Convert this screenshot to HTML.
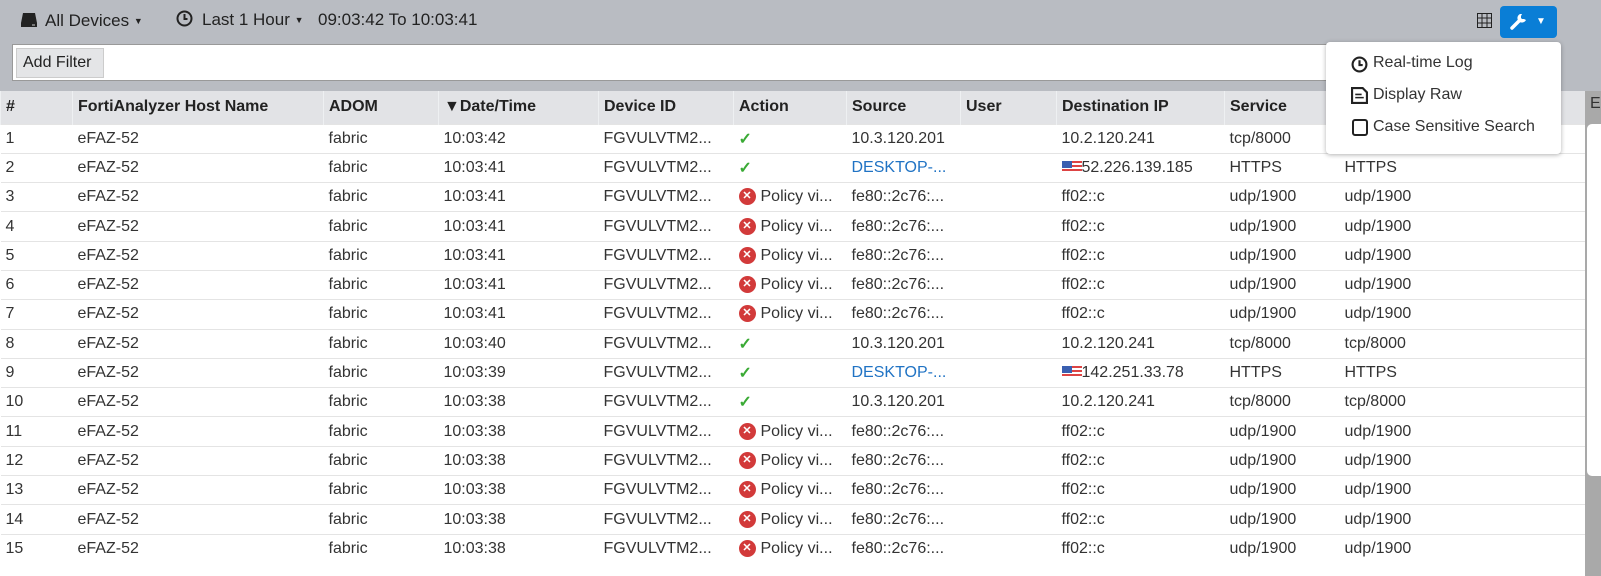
<!DOCTYPE html>
<html><head><style>
*{margin:0;padding:0;box-sizing:border-box}
body{width:1601px;height:576px;overflow:hidden;background:#fff;font-family:"Liberation Sans",sans-serif;font-size:16px;color:#333;position:relative}
.top{position:absolute;left:0;top:0;width:1601px;height:91px;background:#b9bcc2}
.t{position:absolute;white-space:nowrap}
.filter{position:absolute;left:12px;top:44px;width:1330px;height:37px;background:#fff;border:1px solid #999}
.addf{position:absolute;left:3px;top:3px;width:88px;height:30px;background:#e4e5e7;border:1px solid #ccc;font-size:16px;line-height:28px;padding-left:6px;color:#222}
table{position:absolute;left:0;top:91px;width:1585px;border-collapse:collapse;table-layout:fixed}
th{background:#e2e3e6;height:33px;text-align:left;font-weight:bold;padding-left:5px;border-left:1px solid #eef0f2;white-space:nowrap;overflow:hidden;font-size:16px;color:#222}
td{height:29.3px;padding-left:5px;border-top:1px solid #e4e4e4;white-space:nowrap;overflow:hidden;vertical-align:middle}
.blue{color:#2073c4}
.chk{color:#3aaa35;font-weight:bold}
.x{display:inline-block;width:17px;height:17px;border-radius:50%;background:#d23a3a;color:#fff;font-size:11px;line-height:17px;text-align:center;font-weight:bold;vertical-align:top;margin-right:5px;margin-top:0px}
.flag{display:inline-block;width:20px;height:12px;background:repeating-linear-gradient(#d44 0 2px,#fff 2px 4px);position:relative;vertical-align:-1px}
.flag:before{content:"";position:absolute;left:0;top:0;width:10px;height:7px;background:#3a5fb0}
.menu{position:absolute;left:1326px;top:42px;width:235px;height:112px;background:#fff;border-radius:4px;box-shadow:0 1px 5px rgba(0,0,0,.3)}
.sb{position:absolute;left:1585px;top:91px;width:16px;height:485px;background:#a9a9a9}
.thumb{position:absolute;left:1587px;top:124px;width:14px;height:352px;background:#fff;border-radius:5px 0 0 5px}
</style></head><body>
<div class="top"></div>
<svg class="t" style="left:20px;top:12px" width="18" height="16" viewBox="0 0 18 16"><path d="M3 1h12l2 10H1z" fill="#222"/><rect x="1" y="11" width="16" height="4" fill="#222"/><rect x="12" y="12.5" width="3" height="1" fill="#ccc"/></svg>
<div class="t" style="left:45px;top:11px;font-size:17px;color:#222">All Devices <span style="font-size:9px;vertical-align:2px">▼</span></div>
<svg class="t" style="left:176px;top:10px" width="17" height="17" viewBox="0 0 17 17"><circle cx="8.5" cy="8.5" r="7" fill="none" stroke="#222" stroke-width="2"/><path d="M8.5 4v5h3" fill="none" stroke="#222" stroke-width="2"/></svg>
<div class="t" style="left:202px;top:10px;font-size:17px;color:#222">Last 1 Hour <span style="font-size:9px;vertical-align:2px">▼</span></div>
<div class="t" style="left:318px;top:10px;font-size:17px;color:#222">09:03:42 To 10:03:41</div>
<svg class="t" style="left:1477px;top:13px" width="15" height="15" viewBox="0 0 15 15"><rect x="0.5" y="0.5" width="14" height="14" fill="none" stroke="#222"/><path d="M5 0v15M10 0v15M0 5h15M0 10h15" stroke="#222"/></svg>
<div class="t" style="left:1500px;top:6px;width:57px;height:32px;background:#0a7ed6;border-radius:4px"></div>
<svg class="t" style="left:1509px;top:11px" width="20" height="20" viewBox="0 0 20 20"><path d="M3 17l8-8" stroke="#fff" stroke-width="3.5" stroke-linecap="round"/><path d="M11 3a4.5 4.5 0 1 0 6 6l-2-1-2 0-1-1 0-2 1-2z" fill="#fff"/></svg>
<div class="t" style="left:1536px;top:16px;color:#fff;font-size:10px">▼</div>
<div class="filter"><div class="addf">Add Filter</div></div>
<table>
<colgroup><col style="width:72px"><col style="width:251px"><col style="width:115px"><col style="width:160px"><col style="width:135px"><col style="width:113px"><col style="width:114px"><col style="width:96px"><col style="width:168px"><col style="width:115px"><col style="width:246px"></colgroup>
<tr><th>#</th><th>FortiAnalyzer Host Name</th><th>ADOM</th><th>▼Date/Time</th><th>Device ID</th><th>Action</th><th>Source</th><th>User</th><th>Destination IP</th><th>Service</th><th></th></tr>
<tr><td>1</td><td>eFAZ-52</td><td>fabric</td><td>10:03:42</td><td>FGVULVTM2...</td><td class="chk">✓</td><td>10.3.120.201</td><td></td><td>10.2.120.241</td><td>tcp/8000</td><td>tcp/8000</td></tr>
<tr><td>2</td><td>eFAZ-52</td><td>fabric</td><td>10:03:41</td><td>FGVULVTM2...</td><td class="chk">✓</td><td class="blue">DESKTOP-...</td><td></td><td><span class="flag"></span>52.226.139.185</td><td>HTTPS</td><td>HTTPS</td></tr>
<tr><td>3</td><td>eFAZ-52</td><td>fabric</td><td>10:03:41</td><td>FGVULVTM2...</td><td><span class="x">✕</span>Policy vi...</td><td>fe80::2c76:...</td><td></td><td>ff02::c</td><td>udp/1900</td><td>udp/1900</td></tr>
<tr><td>4</td><td>eFAZ-52</td><td>fabric</td><td>10:03:41</td><td>FGVULVTM2...</td><td><span class="x">✕</span>Policy vi...</td><td>fe80::2c76:...</td><td></td><td>ff02::c</td><td>udp/1900</td><td>udp/1900</td></tr>
<tr><td>5</td><td>eFAZ-52</td><td>fabric</td><td>10:03:41</td><td>FGVULVTM2...</td><td><span class="x">✕</span>Policy vi...</td><td>fe80::2c76:...</td><td></td><td>ff02::c</td><td>udp/1900</td><td>udp/1900</td></tr>
<tr><td>6</td><td>eFAZ-52</td><td>fabric</td><td>10:03:41</td><td>FGVULVTM2...</td><td><span class="x">✕</span>Policy vi...</td><td>fe80::2c76:...</td><td></td><td>ff02::c</td><td>udp/1900</td><td>udp/1900</td></tr>
<tr><td>7</td><td>eFAZ-52</td><td>fabric</td><td>10:03:41</td><td>FGVULVTM2...</td><td><span class="x">✕</span>Policy vi...</td><td>fe80::2c76:...</td><td></td><td>ff02::c</td><td>udp/1900</td><td>udp/1900</td></tr>
<tr><td>8</td><td>eFAZ-52</td><td>fabric</td><td>10:03:40</td><td>FGVULVTM2...</td><td class="chk">✓</td><td>10.3.120.201</td><td></td><td>10.2.120.241</td><td>tcp/8000</td><td>tcp/8000</td></tr>
<tr><td>9</td><td>eFAZ-52</td><td>fabric</td><td>10:03:39</td><td>FGVULVTM2...</td><td class="chk">✓</td><td class="blue">DESKTOP-...</td><td></td><td><span class="flag"></span>142.251.33.78</td><td>HTTPS</td><td>HTTPS</td></tr>
<tr><td>10</td><td>eFAZ-52</td><td>fabric</td><td>10:03:38</td><td>FGVULVTM2...</td><td class="chk">✓</td><td>10.3.120.201</td><td></td><td>10.2.120.241</td><td>tcp/8000</td><td>tcp/8000</td></tr>
<tr><td>11</td><td>eFAZ-52</td><td>fabric</td><td>10:03:38</td><td>FGVULVTM2...</td><td><span class="x">✕</span>Policy vi...</td><td>fe80::2c76:...</td><td></td><td>ff02::c</td><td>udp/1900</td><td>udp/1900</td></tr>
<tr><td>12</td><td>eFAZ-52</td><td>fabric</td><td>10:03:38</td><td>FGVULVTM2...</td><td><span class="x">✕</span>Policy vi...</td><td>fe80::2c76:...</td><td></td><td>ff02::c</td><td>udp/1900</td><td>udp/1900</td></tr>
<tr><td>13</td><td>eFAZ-52</td><td>fabric</td><td>10:03:38</td><td>FGVULVTM2...</td><td><span class="x">✕</span>Policy vi...</td><td>fe80::2c76:...</td><td></td><td>ff02::c</td><td>udp/1900</td><td>udp/1900</td></tr>
<tr><td>14</td><td>eFAZ-52</td><td>fabric</td><td>10:03:38</td><td>FGVULVTM2...</td><td><span class="x">✕</span>Policy vi...</td><td>fe80::2c76:...</td><td></td><td>ff02::c</td><td>udp/1900</td><td>udp/1900</td></tr>
<tr><td>15</td><td>eFAZ-52</td><td>fabric</td><td>10:03:38</td><td>FGVULVTM2...</td><td><span class="x">✕</span>Policy vi...</td><td>fe80::2c76:...</td><td></td><td>ff02::c</td><td>udp/1900</td><td>udp/1900</td></tr>
</table>
<div class="sb"></div><div class="thumb"></div>
<div class="menu">
<svg class="t" style="left:25px;top:14px" width="17" height="17" viewBox="0 0 16 16"><circle cx="8" cy="8" r="6.5" fill="none" stroke="#222" stroke-width="2"/><path d="M8 4v4.5h3" fill="none" stroke="#222" stroke-width="2"/></svg>
<div class="t" style="left:47px;top:12px">Real-time Log</div>
<svg class="t" style="left:25px;top:45px" width="17" height="17" viewBox="0 0 16 16"><path d="M1 1h10l4 4v10H1z" fill="none" stroke="#222" stroke-width="2"/><path d="M4 7h6M4 10h8" stroke="#222" stroke-width="1.5"/></svg>
<div class="t" style="left:47px;top:44px">Display Raw</div>
<div class="t" style="left:26px;top:77px;width:16px;height:17px;border:2px solid #222;border-radius:3px"></div>
<div class="t" style="left:47px;top:76px">Case Sensitive Search</div>
</div>
<div class="t" style="left:1590px;top:95px;font-size:16px">E</div>
</body></html>
